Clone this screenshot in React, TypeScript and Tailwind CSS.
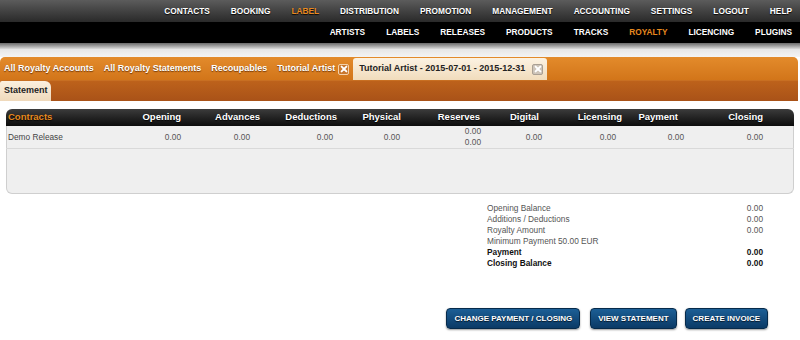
import clsx from 'clsx';

const topNav = ['CONTACTS', 'BOOKING', 'LABEL', 'DISTRIBUTION', 'PROMOTION', 'MANAGEMENT', 'ACCOUNTING', 'SETTINGS', 'LOGOUT', 'HELP'];
const subNav = ['ARTISTS', 'LABELS', 'RELEASES', 'PRODUCTS', 'TRACKS', 'ROYALTY', 'LICENCING', 'PLUGINS'];

// header label + nudge for the value under it (values don't line up exactly with headers)
const columns = [
  { label: 'Opening', nudge: 'mr-0' },
  { label: 'Advances', nudge: 'mr-[10px]' },
  { label: 'Deductions', nudge: 'mr-[4px]' },
  { label: 'Physical', nudge: 'mr-[1px]' },
  { label: 'Reserves', nudge: '-mr-[1px]' },
  { label: 'Digital', nudge: '-mr-[3px]' },
  { label: 'Licensing', nudge: 'mr-[6px]' },
  { label: 'Payment', nudge: '-mr-[6px]' },
  { label: 'Closing', nudge: 'mr-0' },
];

const summary = [
  { label: 'Opening Balance', value: '0.00' },
  { label: 'Additions / Deductions', value: '0.00' },
  { label: 'Royalty Amount', value: '0.00' },
  { label: 'Minimum Payment 50.00 EUR', value: '' },
  { label: 'Payment', value: '0.00', bold: true },
  { label: 'Closing Balance', value: '0.00', bold: true },
];

const gridCols = 'grid grid-cols-[115px_60px_79px_77px_64px_79px_59px_83px_56px_85px_31px]';

function CloseBox({ light }: { light?: boolean }) {
  return (
    <span
      className={clsx(
        'inline-flex h-[11px] w-[11px] items-center justify-center rounded-[2px] border',
        light ? 'border-[#a99f93] bg-[#cdc4b9]' : 'border-[#f3d2ac] bg-[#c9782e]'
      )}
    >
      <svg viewBox="0 0 10 10" className="h-[8px] w-[8px]">
        <path d="M2 2L8 8M8 2L2 8" stroke="white" strokeWidth="2.4" strokeLinecap="round" />
      </svg>
    </span>
  );
}

function NavButton({ children, className }: { children: string; className?: string }) {
  return (
    <button
      className={clsx(
        'h-[21px] rounded-[4px] border border-[#062a4a] bg-gradient-to-b from-[#1c5f96] to-[#0b3a66] px-[7px] text-[8px] font-bold text-white shadow-[0_1px_2px_rgba(0,0,0,0.4)] [text-shadow:0_1px_1px_rgba(0,0,0,0.7)]',
        className
      )}
    >
      {children}
    </button>
  );
}

export default function App() {
  return (
    <div className="h-[340px] w-[800px] overflow-hidden bg-white font-['Liberation_Sans',Arial,sans-serif]">
      {/* Main nav */}
      <nav className="flex h-[22px] items-center justify-end gap-[21px] bg-gradient-to-b from-[#5c5c5c] to-[#2a2a2a] pr-[8px]">
        {topNav.map((item) => (
          <span
            key={item}
            className={clsx(
              'text-[8.3px] font-bold [text-shadow:0_1px_1px_rgba(0,0,0,0.9)]',
              item === 'LABEL' ? 'text-[#e88a1f]' : 'text-white'
            )}
          >
            {item}
          </span>
        ))}
      </nav>
      <nav className="flex h-[21px] items-center justify-end gap-[21px] bg-black pr-[8px]">
        {subNav.map((item) => (
          <span
            key={item}
            className={clsx(
              'text-[8.3px] font-bold [text-shadow:0_1px_1px_rgba(0,0,0,0.9)]',
              item === 'ROYALTY' ? 'text-[#e88a1f]' : 'text-white'
            )}
          >
            {item}
          </span>
        ))}
      </nav>
      <div className="h-[6px] bg-gradient-to-b from-[#6a6a6a] to-[#dcdcdc]" />
      <div className="h-[8px] bg-gradient-to-b from-[#e6e6e6] to-[#f4f4f4]" />

      {/* Tabs */}
      <div className="mr-[2px] overflow-hidden rounded-t-[5px]">
        <div className="flex h-[23px] items-end bg-gradient-to-b from-[#e38b2b] to-[#d27519] pl-[4px]">
          <div className="flex h-[22px] items-center gap-[10px] text-[9px] font-bold text-white [text-shadow:0_1px_1px_rgba(90,40,0,0.8)]">
            <span>All Royalty Accounts</span>
            <span>All Royalty Statements</span>
            <span>Recoupables</span>
            <span className="flex items-center gap-[3px]">
              Tutorial Artist
              <CloseBox />
            </span>
          </div>
          <div className="ml-[4px] flex h-[22px] w-[194px] items-center gap-[7px] rounded-t-[3px] bg-gradient-to-b from-[#fcf2e2] to-[#f1dcbc] pl-[6px] text-[9px] font-bold text-[#222]">
            <span>Tutorial Artist - 2015-07-01 - 2015-12-31</span>
            <CloseBox light />
          </div>
        </div>
        <div className="flex h-[21px] items-end border-t border-[#c86f22] bg-gradient-to-b from-[#bd621b] to-[#a95218]">
          <div className="flex h-[20px] w-[51px] items-center rounded-tr-[6px] rounded-tl-[2px] bg-gradient-to-b from-[#fbefdf] to-[#efd9bb] pl-[4px] text-[9px] font-bold text-[#222]">
            Statement
          </div>
        </div>
      </div>

      {/* Table */}
      <div className="mx-[6px] mt-[8px]">
        <div className={clsx(gridCols, 'h-[17px] items-center rounded-t-[6px] bg-gradient-to-b from-[#3c3c3c] to-[#0d0d0d] text-[9.5px] font-bold [text-shadow:0_1px_1px_rgba(0,0,0,0.9)]')}>
          <span className="pl-[2px] text-[#e88a1f]">Contracts</span>
          {columns.map((c) => (
            <span key={c.label} className="text-right text-white">
              {c.label}
            </span>
          ))}
          <span />
        </div>
        <div className="rounded-b-[6px] border-x border-b border-[#cfcfcf] bg-[#efefef]">
          <div className={clsx(gridCols, 'h-[23px] items-center border-b border-[#d9d9d9] text-[8.3px] text-[#555] -mx-px')}>
            <span className="pl-[2px] text-[#444]">Demo Release</span>
            {columns.map((c) => (
              <span key={c.label} className={clsx('text-right leading-[11px]', c.nudge)}>
                {c.label === 'Reserves' ? (
                  <>
                    0.00
                    <br />
                    0.00
                  </>
                ) : (
                  '0.00'
                )}
              </span>
            ))}
            <span />
          </div>
          <div className="h-[44px]" />
        </div>
      </div>

      {/* Summary */}
      <div className="mr-[37px] ml-auto mt-[9px] w-[276px] text-[8.3px] leading-[11px]">
        {summary.map((s) => (
          <div key={s.label} className={clsx('flex justify-between', s.bold ? 'font-bold text-[#111]' : 'text-[#555]')}>
            <span>{s.label}</span>
            <span>{s.value}</span>
          </div>
        ))}
      </div>

      {/* Actions */}
      <div className="mt-[39px] flex justify-end pr-[32px]">
        <NavButton>CHANGE PAYMENT / CLOSING</NavButton>
        <NavButton className="ml-[10px]">VIEW STATEMENT</NavButton>
        <NavButton className="ml-[8px]">CREATE INVOICE</NavButton>
      </div>
    </div>
  );
}
